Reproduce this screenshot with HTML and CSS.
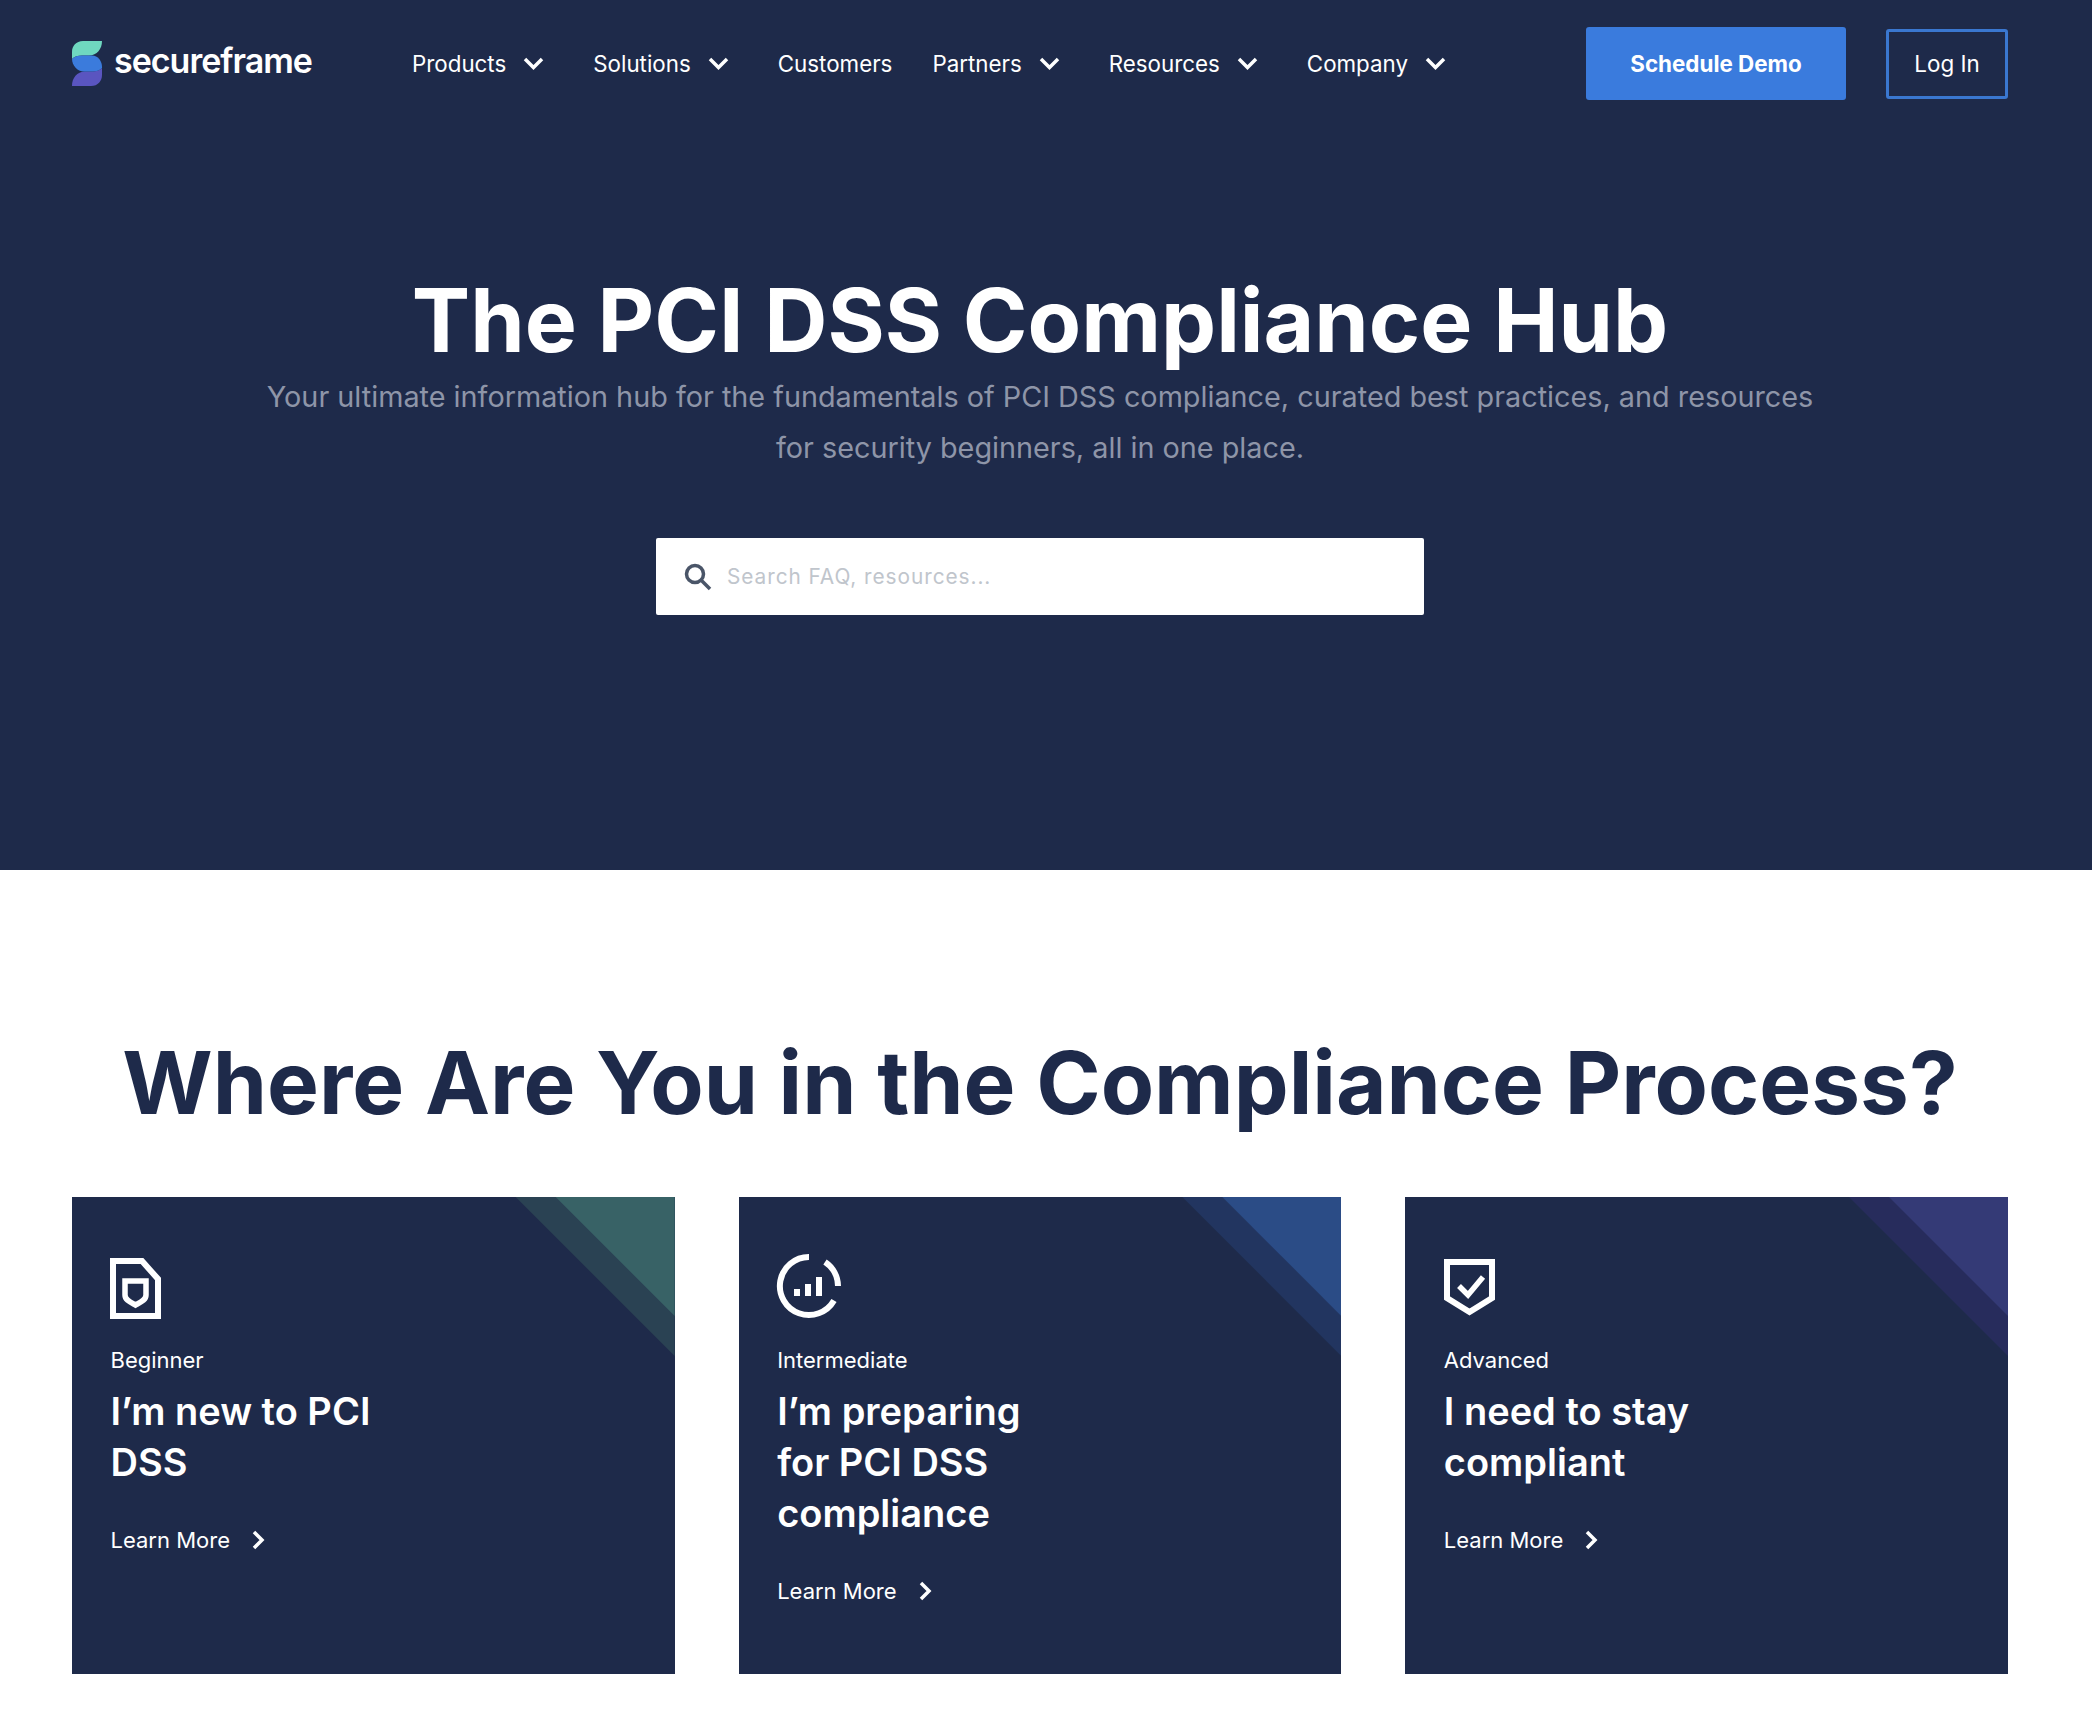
FILE: index.html
```html
<!DOCTYPE html>
<html lang="en">
<head>
<meta charset="utf-8">
<title>The PCI DSS Compliance Hub</title>
<link rel="stylesheet" href="styles.css">
</head>
<body>
<header class="dark">
  <nav class="nav">
    <a class="logo">
      <svg class="logo-mark" viewBox="0 0 30 45" width="30" height="45">
        <path fill="#6fd8c0" d="M30 0H11C4 0 0 5 0 11V18C2 15.500 6 14.500 10 14.500H17C25 14.500 30 8 30 0Z"/>
        <path fill="#5a55c0" d="M0 45H19C26 45 30 40 30 34V27C28 29.500 24 30.500 20 30.500H13C5 30.500 0 37 0 45Z"/>
        <path fill="#3b7bdc" d="M10 14.500H20C26 14.500 30 20 30 26V27C28 29.500 24 30.500 20 30.500H12C5 30.500 0 24 0 18C2 15.500 6 14.500 10 14.500Z"/>
      </svg>
      <span class="logo-text">secureframe</span>
    </a>
    <ul class="menu">
      <li class="menu-item">Products<svg class="chev" viewBox="0 0 39 24" width="39" height="24"><path d="M11 7l8.500 8.500L28 7"/></svg></li>
      <li class="menu-item">Solutions<svg class="chev" viewBox="0 0 39 24" width="39" height="24"><path d="M11 7l8.500 8.500L28 7"/></svg></li>
      <li class="menu-item">Customers</li>
      <li class="menu-item">Partners<svg class="chev" viewBox="0 0 39 24" width="39" height="24"><path d="M11 7l8.500 8.500L28 7"/></svg></li>
      <li class="menu-item">Resources<svg class="chev" viewBox="0 0 39 24" width="39" height="24"><path d="M11 7l8.500 8.500L28 7"/></svg></li>
      <li class="menu-item">Company<svg class="chev" viewBox="0 0 39 24" width="39" height="24"><path d="M11 7l8.500 8.500L28 7"/></svg></li>
    </ul>
    <div class="actions">
      <a class="btn-primary">Schedule Demo</a>
      <a class="btn-outline">Log In</a>
    </div>
  </nav>
  <section class="hero">
    <h1 class="hero-title">The PCI DSS Compliance Hub</h1>
    <p class="hero-sub">Your ultimate information hub for the fundamentals of PCI DSS compliance, curated best practices, and resources for security beginners, all in one place.</p>
    <div class="search">
      <svg class="search-icon" viewBox="0 0 28 28" width="28" height="28"><circle cx="11" cy="11" r="8.500"/><path d="M17 17l9 9"/></svg>
      <input class="search-input" type="text" placeholder="Search FAQ, resources...">
    </div>
  </section>
</header>
<main class="process">
  <h2 class="process-title">Where Are You in the Compliance Process?</h2>
  <div class="cards">
    <article class="card card-teal">
      <svg class="card-icon" viewBox="0 0 64 66" width="64" height="66">
        <path class="line" d="M2 6H31L47 24V61H2Z"/>
        <path class="line thin" d="M14 26H35V40C35 45 30 47 24.500 50C19 47 14 45 14 40Z"/>
      </svg>
      <div class="card-level">Beginner</div>
      <h3 class="card-title">I’m new to PCI DSS</h3>
      <a class="card-link">Learn More<svg class="arrow" viewBox="0 0 14 20" width="14" height="20"><path d="M3 2l8 8-8 8"/></svg></a>
    </article>
    <article class="card card-blue">
      <svg class="card-icon" viewBox="0 0 64 66" width="64" height="66">
        <path class="line" d="M32 2A29 29 0 1 0 57 45.500"/>
        <path class="line" d="M48 7A29 29 0 0 1 61 31"/>
        <path class="solid" d="M17 34h6v7h-6zM28 29h6v12h-6zM39 22h6v19h-6z"/>
      </svg>
      <div class="card-level">Intermediate</div>
      <h3 class="card-title">I’m preparing for PCI DSS compliance</h3>
      <a class="card-link">Learn More<svg class="arrow" viewBox="0 0 14 20" width="14" height="20"><path d="M3 2l8 8-8 8"/></svg></a>
    </article>
    <article class="card card-purple">
      <svg class="card-icon" viewBox="0 0 64 66" width="64" height="66">
        <path class="line" d="M3 7H48V43L25.500 57L3 43Z"/>
        <path class="line thin" d="M15 31L24 40L39 22"/>
      </svg>
      <div class="card-level">Advanced</div>
      <h3 class="card-title">I need to stay compliant</h3>
      <a class="card-link">Learn More<svg class="arrow" viewBox="0 0 14 20" width="14" height="20"><path d="M3 2l8 8-8 8"/></svg></a>
    </article>
  </div>
</main>
</body>
</html>
```
FILE: styles.css
```css
* { box-sizing: border-box; }
html, body { margin: 0; padding: 0; }
body {
  font-family: Inter, "Liberation Sans", sans-serif;
  background: #fff;
  color: #1e2a4a;
}
.dark { background: #1e2a4a; height: 870px; color: #fff; }
.nav {
  display: flex;
  align-items: center;
  height: 127px;
  padding: 0 84px 0 72px;
}
.logo { display: flex; align-items: center; gap: 12px; width: 340px; }
.logo-mark { flex: none; }
.logo-text { font-size: 34px; font-weight: 600; letter-spacing: -1px; line-height: 45px; position: relative; top: -3px; }
.menu {
  display: flex;
  align-items: center;
  gap: 40px;
  list-style: none;
  margin: 0;
  padding: 0;
  font-size: 22.35px;
  font-weight: 400;
}
.menu-item { display: flex; align-items: center; }
.chev { margin-left: 8px; fill: none; stroke: #fff; stroke-width: 3.500; }
.actions { margin-left: auto; display: flex; align-items: center; gap: 40px; }
.btn-primary {
  width: 260px;
  height: 73px;
  display: flex;
  align-items: center;
  justify-content: center;
  background: #3a7bdd;
  border-radius: 3px;
  font-size: 22.4px;
  font-weight: 700;
}
.btn-outline {
  width: 122px;
  height: 70px;
  display: flex;
  align-items: center;
  justify-content: center;
  border: 3px solid #3a77d0;
  border-radius: 3px;
  font-size: 22.4px;
}
.hero {
  display: flex;
  flex-direction: column;
  align-items: center;
  padding: 142px 84px 0 72px;
}
.hero-title { margin: 0; font-size: 87.5px; line-height: 102px; font-weight: 700; }
.hero-sub {
  margin: 0;
  width: 1570px;
  text-align: center;
  font-size: 28.8px;
  line-height: 51px;
  color: #8e95a8;
}
.search {
  margin-top: 65px;
  width: 768px;
  height: 77px;
  display: flex;
  align-items: center;
  gap: 15px;
  padding-left: 28px;
  background: #fff;
  border-radius: 2px;
}
.search-icon { flex: none; fill: none; stroke: #4a5568; stroke-width: 3.500; }
.search-input {
  flex: 1;
  border: 0;
  outline: 0;
  background: transparent;
  padding: 0;
  font-family: inherit;
  font-size: 20.8px;
  letter-spacing: 0.95px;
}
.search-input::placeholder { color: #c0c5cc; opacity: 1; }
.process { padding: 157px 84px 60px 72px; }
.process-title {
  margin: 0 0 59px;
  text-align: center;
  font-size: 87.2px;
  line-height: 111px;
  font-weight: 700;
  color: #1e2a4a;
}
.cards { display: grid; grid-template-columns: repeat(3, 1fr); gap: 64px; }
.card {
  position: relative;
  height: 477px;
  padding: 58px 38px 0 38.5px;
  background: #1e2a4a;
  color: #fff;
  overflow: hidden;
}
.card::before, .card::after {
  content: "";
  position: absolute;
  top: 0;
  right: 0;
  clip-path: polygon(0 0, 100% 0, 100% 100%);
}
.card::before { width: 159px; height: 159px; }
.card::after { width: 119px; height: 119px; }
.card-teal::before { background: #2a4253; }
.card-teal::after { background: #386266; }
.card-blue::before { background: #223560; }
.card-blue::after { background: #2b4c86; }
.card-purple::before { background: #272c5c; }
.card-purple::after { background: #343a76; }
.card-icon { display: block; overflow: visible; }
.line { fill: none; stroke: #fff; stroke-width: 6; }
.line.thin { stroke-width: 5.500; }
.solid { fill: #fff; }
.card-level { margin-top: 23px; font-size: 22px; line-height: 32px; }
.card-title {
  margin: 10px 0 0;
  max-width: 300px;
  font-size: 38px;
  line-height: 51px;
  font-weight: 600;
}
.card-link {
  margin-top: 36px;
  display: flex;
  align-items: center;
  gap: 21px;
  font-size: 22px;
  line-height: 32px;
}
.arrow { fill: none; stroke: #fff; stroke-width: 3.500; }
```
